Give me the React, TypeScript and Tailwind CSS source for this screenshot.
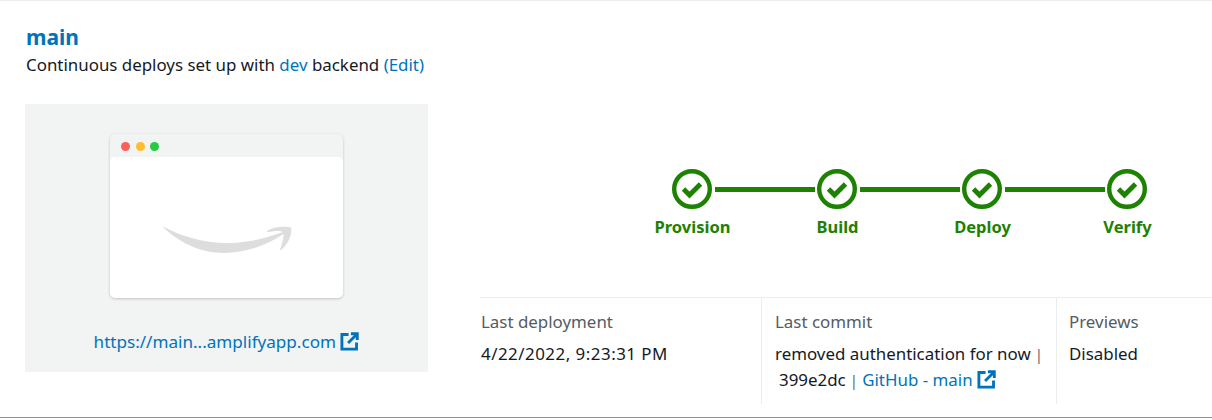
const STEPS = ['Provision', 'Build', 'Deploy', 'Verify']

function ExternalIcon() {
  return (
    <svg viewBox="0 0 20 20" className="inline-block w-[19px] h-[19px] align-[-3px]" fill="none" stroke="#0073bb" strokeWidth="3">
      <path d="M9 2.600H2v15.400h15.400V11" />
      <path d="M11.500 1.800h6.700v6.700" />
      <path d="M18 2L8.500 11.500" />
    </svg>
  )
}

function StepIcon() {
  return (
    <svg viewBox="0 0 40 40" className="w-10 h-10 shrink-0" fill="none" stroke="#1d8102">
      <circle cx="20" cy="20" r="17.800" strokeWidth="4.400" />
      <path d="M11.500 20l6 6 11-11" strokeWidth="4.800" />
    </svg>
  )
}

export default function App() {
  return (
    <div className="w-[1212px] h-[420px] bg-white border-t border-[#eaeded] text-[#16191f] font-['Noto_Sans',sans-serif] overflow-hidden">
      <div className="h-[417px] border-b border-[#879596] px-[25px] pt-[22px]">
        <h2 className="text-[21px] leading-[28px] font-bold text-[#0073bb] pl-px">main</h2>
        <p className="text-[16.900px] leading-[28px] pl-px">
          Continuous deploys set up with <span className="text-[#0073bb]">dev</span> backend <span className="text-[#0073bb]">(Edit)</span>
        </p>

        <div className="flex mt-[25px]">
          {/* Preview */}
          <div className="w-[403px] h-[268px] bg-[#f2f3f3] flex flex-col items-center pt-[30px] shrink-0">
            <div className="w-[233px] h-[164px] rounded-[5px] bg-[#f2f3f3] shadow-[0_1px_3px_rgba(0,0,0,0.2)] flex flex-col overflow-hidden">
              <div className="h-[23px] flex items-center gap-[5.500px] pl-[11px] pt-px shrink-0">
                <span className="w-[9px] h-[9px] rounded-full bg-[#ff5f57]" />
                <span className="w-[9px] h-[9px] rounded-full bg-[#febc2e]" />
                <span className="w-[9px] h-[9px] rounded-full bg-[#28c840]" />
              </div>
              <div className="flex-1 bg-white rounded-[5px] flex items-center justify-center">
                <svg viewBox="0 0 130 30" className="w-[130px] h-[30px] mt-[26px]" fill="#dddddd">
                  <path d="M0 0C18 10 42 17 64 17C84 17 102 13 121 6C122 5.700 123 7 121.500 8C104 20 82 27 62 27C38 27 16 16 0 0Z" />
                  <path d="M105 5C112 0 124 0 129 1.500C130.500 6 127 18 119 24C118 24.500 118 24 118.300 23C120.500 17 123 8 120.500 6C118.500 4 110 5.500 106 6C105 6 104.500 5.500 105 5Z" />
                </svg>
              </div>
            </div>
            <div className="mt-[31px] text-[17.100px] leading-[26px] text-[#0073bb] whitespace-nowrap">
              https://main...amplifyapp.com <ExternalIcon />
            </div>
          </div>

          {/* Right column */}
          <div className="flex-1 ml-[52px] mr-[-25px] flex flex-col">
            <div className="pl-[192px] pt-[65px] flex items-center h-[105px]">
              {STEPS.map((s, i) => (
                <div key={s} className="flex items-center">
                  <StepIcon />
                  {i < STEPS.length - 1 && <div className="w-[100px] h-[5px] mx-[2.500px] bg-[#1d8102]" />}
                </div>
              ))}
            </div>
            <div className="flex pl-[140px] mt-[6px]">
              {STEPS.map(s => (
                <div key={s} className="w-[145px] text-center text-[16.500px] leading-[24px] font-bold text-[#1d8102]">{s}</div>
              ))}
            </div>

            <div className="mt-[58px] border-t border-[#eaeded] flex h-[107px] text-[16.900px] leading-[26px]">
              <div className="w-[282px] pl-px pt-[11px] border-r border-[#eaeded]">
                <div className="text-[#545b64] mb-[6px]">Last deployment</div>
                <div className="tracking-[0.5px]">4/22/2022, 9:23:31 PM</div>
              </div>
              <div className="w-[295px] pl-[13px] pt-[11px] border-r border-[#eaeded]">
                <div className="text-[#545b64] mb-[6px]">Last commit</div>
                <div className="whitespace-nowrap">removed authentication for now <span className="text-[#545b64] text-[14px]">|</span></div>
                <div className="whitespace-nowrap pl-[4px] mt-[-1px]">
                  399e2dc <span className="text-[#545b64] text-[14px]">|</span> <span className="text-[#0073bb]">GitHub - main</span> <ExternalIcon />
                </div>
              </div>
              <div className="flex-1 pl-[12px] pt-[11px]">
                <div className="text-[#545b64] mb-[6px]">Previews</div>
                <div>Disabled</div>
              </div>
            </div>
          </div>
        </div>
      </div>
    </div>
  )
}
